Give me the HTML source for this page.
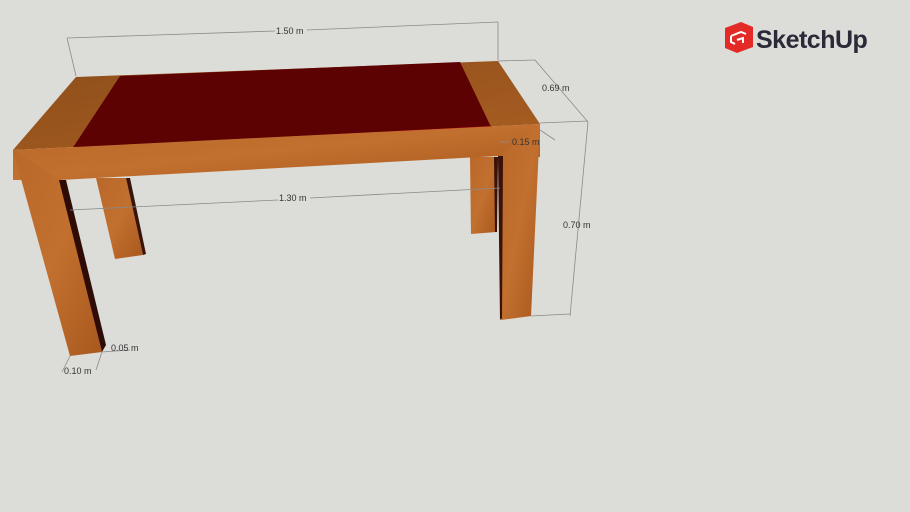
<!DOCTYPE html>
<html><head><meta charset="utf-8"><style>
html,body{margin:0;padding:0;background:#dcdcd8;}
svg{display:block}
</style></head><body>
<svg width="910" height="512" viewBox="0 0 910 512" xmlns="http://www.w3.org/2000/svg">
<defs>
<linearGradient id="wf" x1="0" y1="0" x2="1" y2="1">
<stop offset="0" stop-color="#b9682a"/><stop offset="0.5" stop-color="#c2702f"/><stop offset="1" stop-color="#a9581e"/>
</linearGradient>
<linearGradient id="wt" x1="0" y1="0" x2="1" y2="1">
<stop offset="0" stop-color="#8e4e1a"/><stop offset="1" stop-color="#a85e22"/>
</linearGradient>
</defs>
<rect width="910" height="512" fill="#dcdcd8"/>
<!-- back legs -->
<polygon points="96,178 126,178 143,255 115,259" fill="url(#wf)"/>
<polygon points="126,178 130,178 146,254 143,255" fill="#3a1208"/>
<polygon points="470,157 497,157 496,232 471,234" fill="url(#wf)"/>
<polygon points="494,157 498,157 497,232 495,232" fill="#3a1208"/>
<!-- top surface -->
<polygon points="76,77 498,61 540,124 13,150" fill="url(#wt)"/>
<polygon points="120,76 460,62 492,129 70,152" fill="#5c0202"/>
<polygon points="70,148 492,126 492,131 70,153" fill="#c00a0a"/>
<!-- apron front -->
<polygon points="13,150 540,124 540,157 498,156 60,180 13,180" fill="url(#wf)"/>
<!-- left front leg -->
<polygon points="13,150 60,180 102,352 70,356" fill="url(#wf)"/>
<polygon points="59,180 66,180 106,345 102,352" fill="#2e0c05"/>
<!-- right front leg -->
<polygon points="500,156 540,124 531,316 501,320" fill="url(#wf)"/>
<polygon points="498,156 503,156 502,318 500,320" fill="#3a1208"/>
<!-- dimension lines -->
<g stroke="#8a8a8a" stroke-width="0.8" fill="none">
<line x1="67" y1="38" x2="275" y2="31"/><line x1="307" y1="30" x2="498" y2="22"/>
<line x1="67" y1="38" x2="76" y2="76"/><line x1="498" y1="22" x2="498" y2="60"/>
<line x1="498" y1="61" x2="535" y2="60"/><line x1="535" y1="60" x2="588" y2="122"/>
<line x1="540" y1="123" x2="588" y2="121"/><line x1="588" y1="122" x2="570" y2="316"/>
<line x1="531" y1="316" x2="570" y2="314"/>
<line x1="70" y1="210" x2="278" y2="200"/><line x1="310" y1="198" x2="500" y2="188"/>
<line x1="540" y1="130" x2="555" y2="140"/><line x1="500" y1="142" x2="510" y2="142"/>
<line x1="70" y1="356" x2="62" y2="372"/><line x1="102" y1="352" x2="96" y2="370"/>
<line x1="102" y1="352" x2="130" y2="350"/>
</g>
<g font-family="Liberation Sans, sans-serif" font-size="9" fill="#333">
<text x="276" y="34">1.50 m</text>
<text x="542" y="91">0.69 m</text>
<text x="512" y="145">0.15 m</text>
<text x="279" y="201">1.30 m</text>
<text x="563" y="228">0.70 m</text>
<text x="111" y="351">0.05 m</text>
<text x="64" y="374">0.10 m</text>
</g>
<!-- logo -->
<g>
<polygon points="725,28 741,22 753,27 753,47 737,53 725,48" fill="#e32a26"/>
<path d="M731,36 l10,-4 l5,2 M731,36 v6 l4,2 M737,40 l6,-2 v5" stroke="#fff" stroke-width="2" fill="none"/>
<text x="756" y="48" font-family="Liberation Sans, sans-serif" font-weight="bold" font-size="25" fill="#2a2a38" letter-spacing="-0.5">SketchUp</text>
</g>
</svg>
</body></html>
